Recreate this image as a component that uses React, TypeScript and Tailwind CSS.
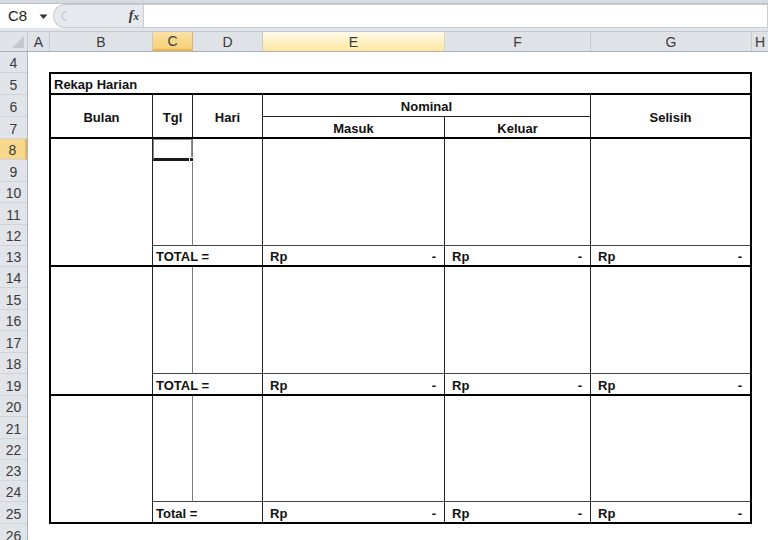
import React from "react";

const rowNums = [4,5,6,7,8,9,10,11,12,13,14,15,16,17,18,19,20,21,22,23,24,25,26];
const tall = new Set([5,6,7,9,11,15,17,19,21,25,26]);

function RpCell({ rowCls, colCls, last }: { rowCls: string; colCls: string; last?: boolean }) {
  return (
    <div
      className={`${rowCls} ${colCls} flex items-center justify-between pt-[3px] pl-[7px] pr-[8px] border-b-2 border-b-black ${last ? "border-r-2 border-r-black" : "border-r border-r-[#222]"}`}
    >
      <span>Rp</span>
      <span>-</span>
    </div>
  );
}

function Group({
  body,
  total,
  totalLabel,
  selected,
}: {
  body: string;
  total: string;
  totalLabel: string;
  selected?: boolean;
}) {
  return (
    <>
      <div className={`${body} col-start-1 row-span-6 border-r border-r-[#222] border-b-2 border-b-black`} />
      <div className={`${body} col-start-2 row-span-5 relative border-r border-r-[#7a7a7a] border-b border-b-[#444]`}>
        {selected && (
          <div className="absolute top-0 left-0 right-0 h-[22px] border border-[#8c8c8c] border-b-[3px] border-b-[#1a1a1a]">
            <div className="absolute -right-[3px] -bottom-[4px] w-[5px] h-[5px] bg-[#1a1a1a] border border-white" />
          </div>
        )}
      </div>
      <div className={`${body} col-start-3 row-span-5 border-r border-r-[#222] border-b border-b-[#444]`} />
      <div className={`${body} col-start-4 row-span-5 border-r border-r-[#222] border-b border-b-[#444]`} />
      <div className={`${body} col-start-5 row-span-5 border-r border-r-[#222] border-b border-b-[#444]`} />
      <div className={`${body} col-start-6 row-span-5 border-r-2 border-r-black border-b border-b-[#444]`} />
      <div className={`${total} col-start-2 col-span-2 flex items-center pt-[3px] pl-[3px] border-r border-r-[#222] border-b-2 border-b-black`}>
        {totalLabel}
      </div>
      <RpCell rowCls={total} colCls="col-start-4" />
      <RpCell rowCls={total} colCls="col-start-5" />
      <RpCell rowCls={total} colCls="col-start-6" last />
    </>
  );
}

export default function App() {
  return (
    <div className="w-[768px] h-[540px] overflow-hidden bg-white font-['Liberation_Sans',Arial,sans-serif] text-[#111]">
      {/* top strip */}
      <div className="h-[4px] bg-[#d6dbe1] border-b border-b-[#b9c0c9]" />
      {/* formula bar */}
      <div className="h-[24px] flex bg-white">
        <div className="w-[53px] flex items-center justify-between pl-[8px] pr-[5px] pt-[1px] text-[15px] text-[#222]">
          <span>C8</span>
          <svg width="9" height="6" viewBox="0 0 9 6">
            <path d="M0.5 0.5 L8.5 0.5 L4.5 5 Z" fill="#333" />
          </svg>
        </div>
        <div className="w-[90px] flex items-center justify-between bg-[#e6e9ed] rounded-l-[12px] border border-[#c8cdd4] border-r-0 pl-[6px] pr-[4px]">
          <svg width="8" height="10" viewBox="0 0 8 10">
            <path d="M6 1 A4 4 0 0 0 6 9" stroke="#b8bec6" strokeWidth="1" fill="none" />
          </svg>
          <span className="font-['Liberation_Serif',serif] italic font-bold text-[14px] text-[#333] leading-none">
            f<span className="text-[11px]">x</span>
          </span>
        </div>
        <div className="flex-1 bg-white border border-[#c8cdd4]" />
      </div>
      <div className="h-[3px] bg-[#e2e6eb]" />
      {/* column headers */}
      <div className="h-[21px] flex text-[14px] text-[#3a3a3a] bg-[#dfe3e8] border-b border-b-[#aab2bc] border-t border-t-[#c3c9d1]">
        <div className="w-[28px] relative border-r border-r-[#c5cad1]">
          <svg className="absolute right-[3px] bottom-[3px]" width="12" height="12" viewBox="0 0 12 12">
            <path d="M12 0 L12 12 L0 12 Z" fill="#c4c9d0" />
          </svg>
        </div>
        <div className="w-[22px] flex items-center justify-center pt-[2px] border-r border-r-[#c5cad1]">A</div>
        <div className="w-[103px] flex items-center justify-center pt-[2px] border-r border-r-[#c5cad1]">B</div>
        <div className="w-[40px] flex items-center justify-center pt-[2px] bg-gradient-to-b from-[#fbe2a6] to-[#f6cf77] border-b-2 border-b-[#eeb54a] border-r border-r-[#e2b45a]">C</div>
        <div className="w-[70px] flex items-center justify-center pt-[2px] border-r border-r-[#c5cad1]">D</div>
        <div className="w-[182px] flex items-center justify-center pt-[2px] bg-gradient-to-b from-[#fffaea] to-[#fde8a0] border-r border-r-[#e3d7a8]">E</div>
        <div className="w-[146px] flex items-center justify-center pt-[2px] border-r border-r-[#c5cad1]">F</div>
        <div className="w-[161px] flex items-center justify-center pt-[2px] border-r border-r-[#c5cad1]">G</div>
        <div className="flex-1 flex items-center pt-[2px] pl-[3px]">H</div>
      </div>
      {/* body */}
      <div className="flex">
        <div className="w-[28px] flex flex-col bg-[#e1e5ea] border-r border-r-[#aab2bc] text-[14px] text-[#3a3a3a]">
          {rowNums.map((n) => (
            <div
              key={n}
              className={`${tall.has(n) ? "h-[22px]" : "h-[21px]"} shrink-0 flex items-center justify-center pt-[3px] border-b border-b-[#cfd4da] ${n === 8 ? "bg-[#f8d88c] border-r-2 border-r-[#eeb54a]" : ""}`}
            >
              {n}
            </div>
          ))}
        </div>
        <div className="flex-1 pt-[20px] pl-[21px]">
          <div className="w-[703px] grid grid-cols-[102px_40px_70px_182px_146px_161px] grid-rows-[21px_22px_22px_21px_22px_21px_22px_21px_21px_21px_22px_21px_22px_21px_22px_21px_22px_21px_21px_21px_22px] border-l-2 border-t-2 border-black text-[13px] font-bold">
            <div className="row-start-1 col-start-1 col-span-6 flex items-center pt-[3px] pl-[3px] border-r-2 border-r-black border-b-2 border-b-black">
              Rekap Harian
            </div>
            <div className="row-start-2 row-span-2 col-start-1 flex items-center justify-center pt-[3px] border-r border-r-[#222] border-b-2 border-b-black">
              Bulan
            </div>
            <div className="row-start-2 row-span-2 col-start-2 flex items-center justify-center pt-[3px] border-r border-r-[#222] border-b-2 border-b-black">
              Tgl
            </div>
            <div className="row-start-2 row-span-2 col-start-3 flex items-center justify-center pt-[3px] border-r border-r-[#222] border-b-2 border-b-black">
              Hari
            </div>
            <div className="row-start-2 col-start-4 col-span-2 flex items-center justify-center pt-[3px] border-r border-r-[#222] border-b border-b-[#222]">
              Nominal
            </div>
            <div className="row-start-3 col-start-4 flex items-center justify-center pt-[3px] border-r border-r-[#222] border-b-2 border-b-black">
              Masuk
            </div>
            <div className="row-start-3 col-start-5 flex items-center justify-center pt-[3px] border-r border-r-[#222] border-b-2 border-b-black">
              Keluar
            </div>
            <div className="row-start-2 row-span-2 col-start-6 flex items-center justify-center pt-[3px] border-r-2 border-r-black border-b-2 border-b-black">
              Selisih
            </div>
            <Group body="row-start-4" total="row-start-9" totalLabel="TOTAL =" selected />
            <Group body="row-start-10" total="row-start-15" totalLabel="TOTAL =" />
            <Group body="row-start-16" total="row-start-21" totalLabel="Total =" />
          </div>
        </div>
      </div>
    </div>
  );
}
